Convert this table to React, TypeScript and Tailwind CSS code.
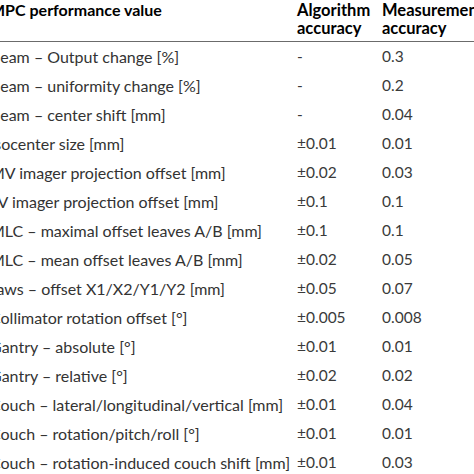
import React from "react";

const rows: [string, string, string][] = [
  ["Beam – Output change [%]", "-", "0.3"],
  ["Beam – uniformity change [%]", "-", "0.2"],
  ["Beam – center shift [mm]", "-", "0.04"],
  ["Isocenter size [mm]", "±0.01", "0.01"],
  ["MV imager projection offset [mm]", "±0.02", "0.03"],
  ["kV imager projection offset [mm]", "±0.1", "0.1"],
  ["MLC – maximal offset leaves A/B [mm]", "±0.1", "0.1"],
  ["MLC – mean offset leaves A/B [mm]", "±0.02", "0.05"],
  ["Jaws – offset X1/X2/Y1/Y2 [mm]", "±0.05", "0.07"],
  ["Collimator rotation offset [°]", "±0.005", "0.008"],
  ["Gantry – absolute [°]", "±0.01", "0.01"],
  ["Gantry – relative [°]", "±0.02", "0.02"],
  ["Couch – lateral/longitudinal/vertical [mm]", "±0.01", "0.04"],
  ["Couch – rotation/pitch/roll [°]", "±0.01", "0.01"],
  ["Couch – rotation-induced couch shift [mm]", "±0.01", "0.03"],
];

export default function App() {
  return (
    <div className="w-[474px] h-[474px] overflow-hidden bg-white">
      <table
        className="ml-[-10px] border-collapse table-fixed w-[640px]"
        style={{ fontFamily: 'Lato, "Open Sans", sans-serif' }}
      >
        <colgroup>
          <col className="w-[307px]" />
          <col className="w-[85px]" />
          <col className="w-[248px]" />
        </colgroup>
        <thead>
          <tr className="border-b border-[#6b6b6b]">
            <th className="text-left align-top font-bold text-[16px] text-black leading-[18px] pt-[1px] pb-[4px] whitespace-nowrap">
              MPC performance value
            </th>
            <th className="text-left align-top font-bold text-[16.5px] text-black leading-[18px] pt-[1px] pb-[4px]">
              Algorithm
              <br />
              accuracy
            </th>
            <th className="text-left align-top font-bold text-[16.5px] text-black leading-[18px] pt-[1px] pb-[4px]">
              Measurement
              <br />
              accuracy
            </th>
          </tr>
        </thead>
        <tbody>
          {rows.map((r, i) => (
            <tr key={i} className="h-[29px]">
              <td className="p-0 leading-[29px] whitespace-nowrap text-[16px] text-[#333]">{r[0]}</td>
              <td className="p-0 leading-[29px] whitespace-nowrap text-[15.5px] text-[#3a3a3a]">{r[1]}</td>
              <td className="p-0 leading-[29px] whitespace-nowrap text-[15.5px] text-[#3a3a3a]">{r[2]}</td>
            </tr>
          ))}
        </tbody>
      </table>
    </div>
  );
}
